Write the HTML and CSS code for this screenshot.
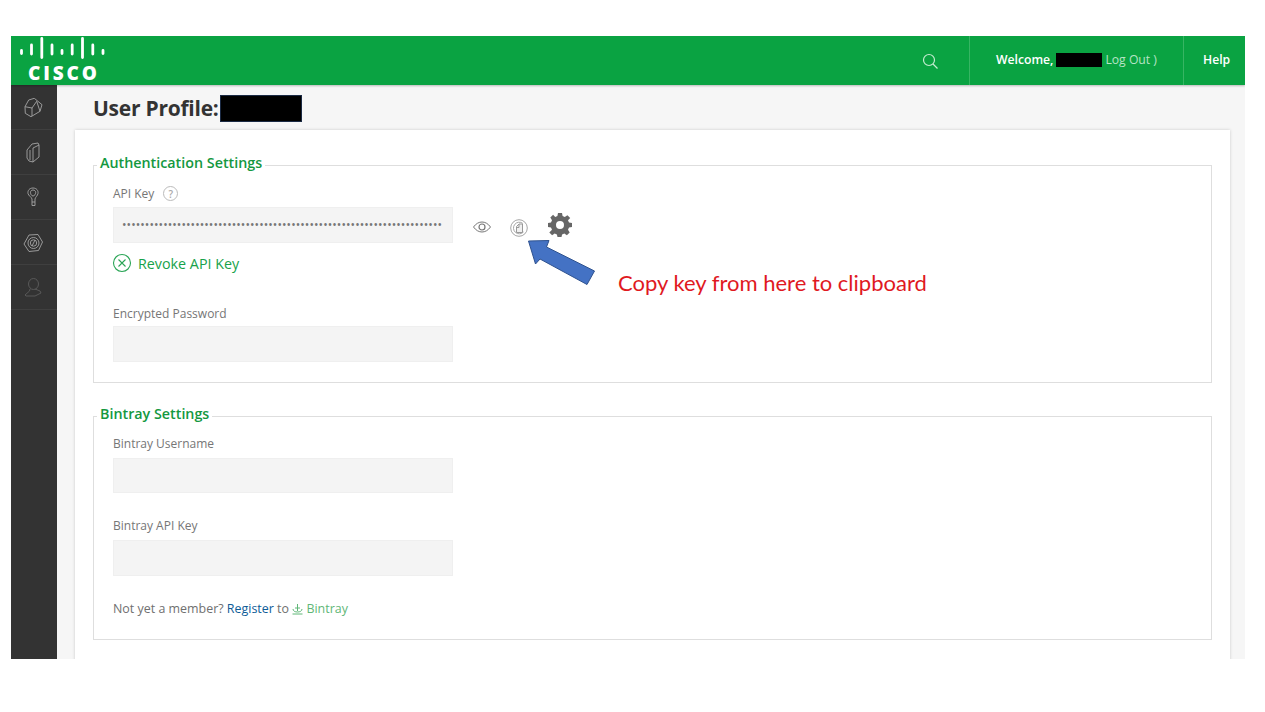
FILE: index.html
```html
<!DOCTYPE html>
<html lang="en">
<head>
<meta charset="utf-8">
<title>User Profile</title>
<link rel="stylesheet" href="styles.css">
</head>
<body>
<div class="app">
  <header class="topbar">
    <div class="logo">
      <svg class="logo-bars" width="90" height="22" viewBox="0 0 90 22" aria-hidden="true">
        <g fill="none" stroke="#fff" stroke-width="2.800" stroke-linecap="round">
          <path d="M2.500 13.500v3M12.500 8v9M22.800 1.500v19M33 8v9M43 13.500v3M53.200 8v9M63.500 1.500v19M73.800 8v9M84 13.500v3"/>
        </g>
      </svg>
      <span class="logo-text">CISCO</span>
    </div>
    <div class="search-cell">
      <svg width="18" height="18" viewBox="0 0 18 18" aria-hidden="true"><circle cx="8" cy="8" r="5.500" fill="none" stroke="#c4ecd0" stroke-width="1.200"/><path d="M12 12l4.500 4.500" stroke="#c4ecd0" stroke-width="1.200"/></svg>
    </div>
    <div class="user-cell"><b>Welcome,</b><span class="redact redact-name"></span><span class="logout">Log Out )</span></div>
    <div class="help-cell"><b>Help</b></div>
  </header>
  <div class="body">
    <nav class="sidebar">
      <div class="side-item side-low">
        <svg width="20" height="20" viewBox="0 0 20 20" aria-hidden="true"><path d="M2 8.700l.3 6.600L8 18.700l9-5.400 2-6.600L11.300.3 5.700 2zM2 8.700L9 10v8M9 10l4.700-6.700M13.700 3.300L17 13.300" fill="none" stroke="#a5a5a5" stroke-width=".9"/></svg>
      </div>
      <div class="side-item side-low">
        <svg width="18" height="22" viewBox="0 0 18 22" aria-hidden="true"><path d="M3 8l5-6 6-1 1 2v12l-6 5-4-1-2-3zM6 8v10M9 6v14M9 6l6-3" fill="none" stroke="#a5a5a5" stroke-width=".9"/></svg>
      </div>
      <div class="side-item">
        <svg width="14" height="20" viewBox="0 0 14 20" aria-hidden="true"><path d="M7 1c3.500 0 5.500 2.500 5 5.500-.4 2.200-2.500 3.500-3 5.500v6.500H6V12C5.500 10 2.400 8.700 2 6.500 1.500 3.500 3.500 1 7 1zM4.500 5.500C4.500 4 5.500 3 7 3s2.700 1 2.700 2.500S8.500 9 7 9 4.500 7 4.500 5.500zM6 15h3" fill="none" stroke="#a5a5a5" stroke-width=".9"/></svg>
      </div>
      <div class="side-item side-low">
        <svg width="20" height="20" viewBox="0 0 20 20" aria-hidden="true"><path d="M6 2l9-.5L19.500 9l-4 8.500-9.500 1L1 11z" fill="none" stroke="#a5a5a5" stroke-width=".9"/><circle cx="10.500" cy="10" r="5.500" fill="none" stroke="#a5a5a5" stroke-width=".9"/><circle cx="10.500" cy="10" r="3.200" fill="none" stroke="#a5a5a5" stroke-width=".9"/><path d="M9 13l3-6" stroke="#a5a5a5" stroke-width=".9"/></svg>
      </div>
      <div class="side-item">
        <svg width="20" height="20" viewBox="0 0 20 20" aria-hidden="true"><ellipse cx="10.500" cy="7" rx="5" ry="5.500" fill="none" stroke="#5c5c5c" stroke-width=".9"/><path d="M7 12l-.5 2L2 18l1 1h9l6-3-1-2-5-2" fill="none" stroke="#5c5c5c" stroke-width=".9"/></svg>
      </div>
    </nav>
    <main class="main">
      <div class="title-row">
        <h1 class="title">User Profile:</h1><span class="redact redact-title"></span>
      </div>
      <section class="card">
        <fieldset class="group group-auth">
          <legend class="legend">Authentication Settings</legend>
          <div class="label-row">
            <label class="label">API Key</label>
            <span class="help-icon">?</span>
          </div>
          <div class="key-row">
            <div class="input input-key">••••••••••••••••••••••••••••••••••••••••••••••••••••••••••••••••••••••</div>
            <svg class="icon-eye" width="20" height="14" viewBox="0 0 20 14" aria-hidden="true"><path d="M1.500 7C4 3.500 7 2 10 2s6 1.500 8.500 5c-2.500 3.500-5.500 5-8.500 5S4 10.500 1.500 7z" fill="none" stroke="#777" stroke-width="1"/><circle cx="10" cy="7" r="3" fill="none" stroke="#777" stroke-width="1.200"/></svg>
            <svg class="icon-copy" width="18" height="18" viewBox="0 0 18 18" aria-hidden="true"><circle cx="9" cy="9" r="8.300" fill="none" stroke="#a5a5a5" stroke-width="1"/><path d="M12.800 4.400A5.800 5.800 0 1 0 13.500 13" fill="none" stroke="#a5a5a5" stroke-width="1"/><path d="M6.500 13.500V7.500L9 5h3.500v8.500zM9 5v3.500H6.500" fill="#f0f0f0" stroke="#999" stroke-width="1"/></svg>
            <svg class="icon-gear" width="24" height="24" viewBox="0 0 24 24" aria-hidden="true"><path fill="#666" fill-rule="evenodd" d="M10 1h4l.6 3 2.200 1 2.600-1.700 2.800 2.800L20 8.200l1 2.200 3 .6v4l-3 .6-1 2.200 1.700 2.600-2.800 2.800-2.600-1.700-2.200 1-.6 2.500h-4l-.6-2.500-2.200-1-2.600 1.700-2.800-2.800L4 17.800l-1-2.200-3-.6v-4l3-.6 1-2.200-1.700-2.600 2.800-2.800L7.200 5l2.200-1zM12 9a4 4 0 100 8 4 4 0 000-8z" transform="translate(0 -1)"/></svg>
          </div>
          <div class="revoke">
            <svg width="20" height="20" viewBox="0 0 20 20" aria-hidden="true"><circle cx="10" cy="10" r="8.500" fill="none" stroke="#2aa556" stroke-width="1.100"/><path d="M6.500 6.500l7 7M13.500 6.500l-7 7" stroke="#2aa556" stroke-width="1.100"/></svg>
            <span>Revoke API Key</span>
          </div>
          <label class="label label-pass">Encrypted Password</label>
          <div class="input input-pass"></div>
        </fieldset>
        <fieldset class="group group-bintray">
          <legend class="legend">Bintray Settings</legend>
          <label class="label">Bintray Username</label>
          <div class="input input-tall input-short"></div>
          <label class="label label-next">Bintray API Key</label>
          <div class="input input-tall"></div>
          <p class="member">Not yet a member? <a class="register">Register</a> to
            <svg width="11" height="12" viewBox="0 0 11 12" aria-hidden="true"><path d="M5.500 1v7M3 5h5M1 6c0 2 2 3 4.500 3S10 8 10 6M0.500 11h10" fill="none" stroke="#5fb777" stroke-width="1"/></svg>
            <span class="bintray">Bintray</span></p>
        </fieldset>
      </section>
    </main>
  </div>
</div>
<svg class="arrow" width="70" height="46" viewBox="0 0 70 46" aria-hidden="true"><path d="M1.500 1L22 .5 19.500 7 67.500 31 60 44.500 13 19 8.500 24z" fill="#4472c4" stroke="#2f528f" stroke-width="1"/></svg>
<div class="annotation">Copy key from here to clipboard</div>
</body>
</html>
```

FILE: styles.css
```css
* { box-sizing: border-box; }
html, body { margin: 0; padding: 0; height: 100%; background: #fff; overflow: hidden; }
body { font-family: "Open Sans", "Liberation Sans", sans-serif; color: #6f6f6f; padding: 36px 20px 0 11px; }
.app { height: 623px; display: flex; flex-direction: column; overflow: hidden; background: #f6f6f6; }

.topbar { height: 49px; flex: none; background: #0aa342; display: flex; align-items: stretch; color: #fff; font-size: 12.200px; box-shadow: 0 1px 2px rgba(0,0,0,.25); z-index: 1; }
.logo { width: 100px; margin-right: auto; padding: 1px 0 0 8px; display: flex; flex-direction: column; }
.logo-bars { display: block; flex: none; }
.logo-text { font-weight: 800; font-size: 19px; line-height: 20px; letter-spacing: 2.900px; margin-left: 9px; margin-top: 4px; }
.search-cell { width: 48px; display: flex; align-items: center; justify-content: flex-start; }
.user-cell { width: 215px; border-left: 1px solid #37b563; border-right: 1px solid #37b563; display: flex; align-items: center; padding: 0 0 2px 26px; }
.user-cell b, .help-cell b { font-weight: 600; }
.redact { background: #000; display: block; }
.redact-name { width: 46px; height: 14px; margin-left: 3px; }
.logout { margin-left: 3px; color: #b7e4c5; font-weight: 400; }
.help-cell { width: 61px; display: flex; align-items: center; padding: 0 0 2px 19px; }

.body { flex: 1; display: flex; min-height: 0; }
.sidebar { width: 46px; flex: none; background: #333; }
.side-item { height: 45px; display: flex; align-items: center; justify-content: center; padding-right: 3px; border-bottom: 1px solid #3f3f3f; }
.side-low { padding-top: 2px; }

.main { flex: 1; padding: 0 15px 0 18px; min-width: 0; }
.title-row { height: 45px; display: flex; align-items: center; padding: 0 0 0 18px; }
.title { margin: 0; font-size: 21px; font-weight: 700; color: #333; letter-spacing: -.25px; }
.redact-title { width: 82px; height: 27px; margin: 1px 0 0 1px; border: 1px solid #1b2a44; }
.card { background: #fff; box-shadow: 0 0 3px rgba(0,0,0,.18); padding: 25px 18.500px 40px 18px; height: 600px; }

.group { margin: 0; border: 1px solid #dedede; padding: 0 19px; min-width: 0; display: block; }
.group-auth { height: 228px; }
.group-bintray { height: 234px; margin-top: 23px; padding-top: 9px; }
.legend { padding: 0 3px 4px; margin-left: -16px; font-size: 14.300px; font-weight: 600; color: #14983f; line-height: 16px; }

.label { display: block; font-size: 12px; line-height: 17px; color: #767676; }
.label-row { display: flex; align-items: center; height: 17px; margin-top: 10px; gap: 9px; }
.help-icon { width: 15px; height: 15px; border-radius: 50%; border: 1px solid #bbb; color: #aaa; font-size: 10px; font-weight: 600; display: flex; align-items: center; justify-content: center; }
.input { width: 339.500px; height: 36px; background: #f4f4f4; border: 1px solid #efefef; margin-top: 5px; }
.input-pass { margin-top: 4px; }
.input-tall { margin-top: 6px; }
.input-short { height: 35px; }
.key-row { display: flex; align-items: center; }
.input-key { font-size: 12px; line-height: 33px; padding-left: 8px; color: #777; letter-spacing: .06px; white-space: nowrap; overflow: hidden; }
.icon-eye { margin-left: 19px; margin-top: 9px; flex: none; }
.icon-copy { margin-left: 18.500px; margin-top: 10px; flex: none; }
.icon-gear { margin-left: 20px; margin-top: 4px; flex: none; }

.revoke { display: flex; align-items: center; gap: 6px; margin: 9px 0 0 -1px; height: 22px; color: #17a24a; font-size: 14.300px; }
.label-pass { margin-top: 31px; }
.label-next { margin-top: 24px; }
.member { margin: 24px 0 0; font-size: 12.450px; line-height: 17px; color: #6f6f6f; }
.member svg { vertical-align: -2px; }
.register { color: #0d5c97; }
.bintray { color: #5fb777; }

.arrow { position: absolute; left: 527px; top: 240px; }
.annotation { position: absolute; left: 618px; top: 269px; font-family: Lato, "Liberation Sans", sans-serif; font-size: 22px; line-height: 28px; color: #e0191f; white-space: nowrap; }
```
